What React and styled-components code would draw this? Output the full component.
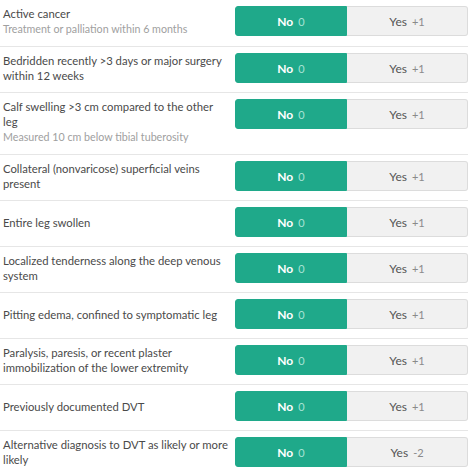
import React from "react";
import styled, { createGlobalStyle } from "styled-components";

const GlobalStyle = createGlobalStyle`
  body {
    margin: 0;
    background: #fff;
    font-family: "Lato", "Open Sans", sans-serif;
  }
`;

const List = styled.div`
  width: 468px;
  display: flex;
  flex-direction: column;
`;

const Row = styled.div`
  display: flex;
  align-items: flex-start;
  gap: 4px;
  padding: 6px 0 9px 3px;
  border-bottom: 1px solid #e6e6e6;
  &:last-child {
    border-bottom: none;
  }
`;

const Label = styled.div`
  flex: 1;
  min-height: 30px;
  display: flex;
  flex-direction: column;
  justify-content: center;
`;

const Title = styled.div`
  font-size: 11.3px;
  line-height: 15px;
  color: #4a4a4a;
  white-space: pre-line;
`;

const Hint = styled.div`
  font-size: 10.7px;
  line-height: 16px;
  color: #a0a0a0;
`;

const Toggle = styled.div`
  width: 233px;
  height: 30px;
  flex: none;
  display: grid;
  grid-template-columns: 112px 1fr;
  font-size: 12px;
`;

const Option = styled.div`
  display: flex;
  align-items: center;
  justify-content: center;
  gap: 5px;
  border-radius: ${(p) => (p.$left ? "3px 0 0 3px" : "0 3px 3px 0")};
  background: ${(p) => (p.$active ? "#1fa98a" : "#f1f1f1")};
  border: 1px solid ${(p) => (p.$active ? "#1fa98a" : "#dcdcdc")};
  border-left: ${(p) => (p.$left ? undefined : "none")};
  color: ${(p) => (p.$active ? "#fff" : "#555")};
  font-weight: ${(p) => (p.$active ? 700 : 400)};
`;

const Points = styled.span`
  font-weight: 400;
  font-size: 11px;
  color: ${(p) => (p.$active ? "#a6e3d4" : "#8a8a8a")};
`;

const criteria = [
  { title: "Active cancer", hint: "Treatment or palliation within 6 months", yes: "+1" },
  { title: "Bedridden recently >3 days or major surgery within 12 weeks", yes: "+1" },
  {
    title: "Calf swelling >3 cm compared to the other\nleg",
    hint: "Measured 10 cm below tibial tuberosity",
    yes: "+1",
  },
  { title: "Collateral (nonvaricose) superficial veins present", yes: "+1" },
  { title: "Entire leg swollen", yes: "+1" },
  { title: "Localized tenderness along the deep venous system", yes: "+1" },
  { title: "Pitting edema, confined to symptomatic leg", yes: "+1" },
  { title: "Paralysis, paresis, or recent plaster immobilization of the lower extremity", yes: "+1" },
  { title: "Previously documented DVT", yes: "+1" },
  { title: "Alternative diagnosis to DVT as likely or more likely", yes: "-2" },
];

function App() {
  return (
    <>
      <GlobalStyle />
      <List>
        {criteria.map((c) => (
          <Row key={c.title}>
            <Label>
              <Title>{c.title}</Title>
              {c.hint && <Hint>{c.hint}</Hint>}
            </Label>
            <Toggle>
              <Option $left $active>
                No <Points $active>0</Points>
              </Option>
              <Option>
                Yes <Points>{c.yes}</Points>
              </Option>
            </Toggle>
          </Row>
        ))}
      </List>
    </>
  );
}

export default App;
